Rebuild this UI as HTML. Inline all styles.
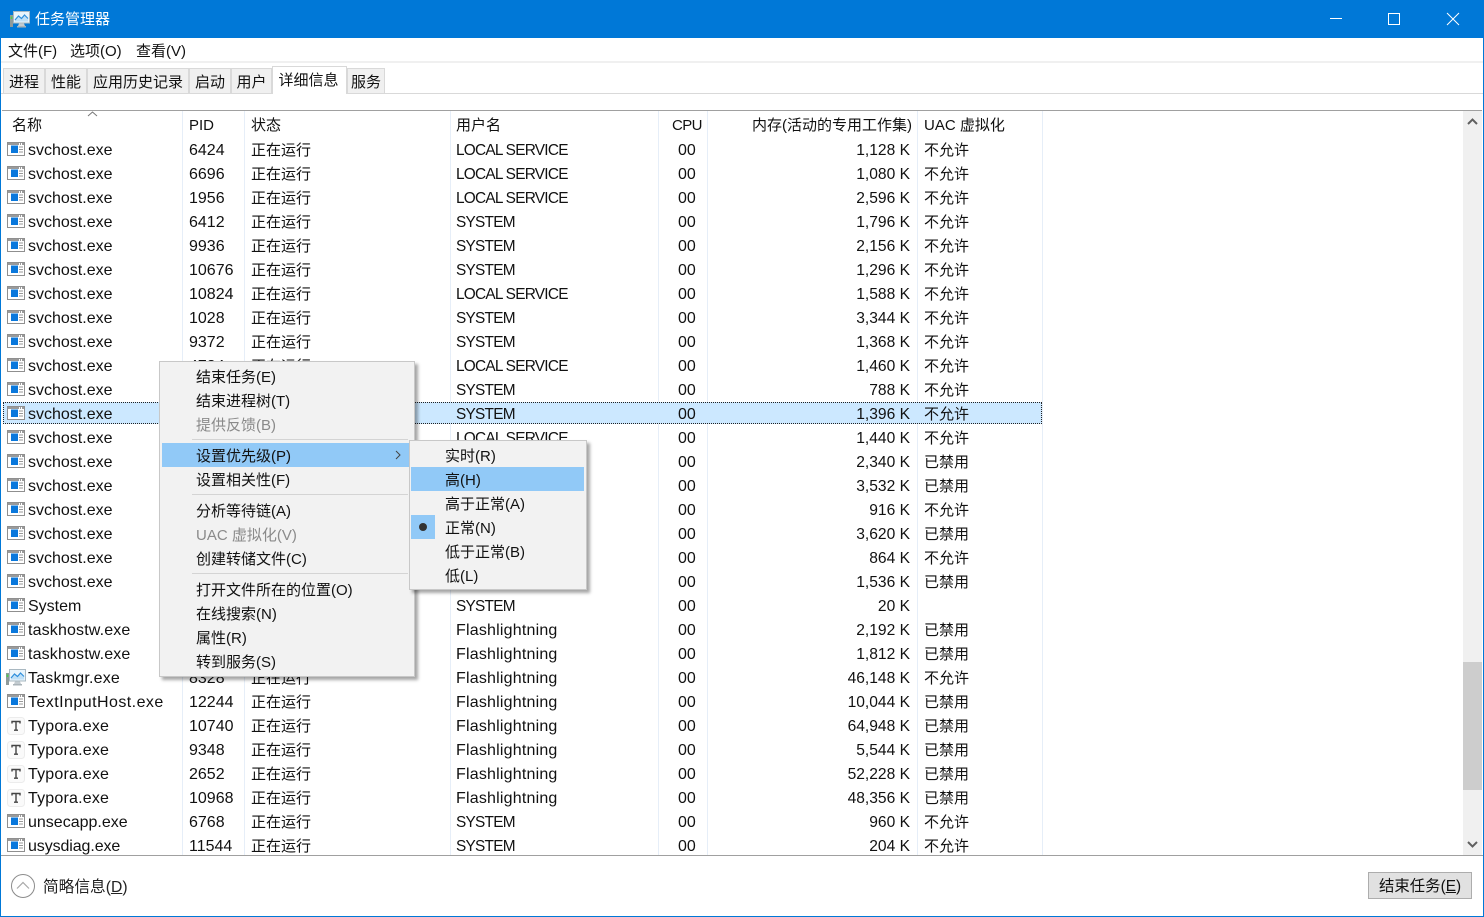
<!DOCTYPE html>
<html lang="zh"><head><meta charset="utf-8"><title>任务管理器</title>
<style>
html,body{margin:0;padding:0;width:1484px;height:917px;overflow:hidden;background:#fff}
body{position:relative;font:15px/24px "Liberation Sans","Noto Sans CJK SC",sans-serif;color:#111}
.a{position:absolute}
.t{position:absolute;white-space:nowrap;line-height:24px}
#tb{left:0;top:0;width:1484px;height:38px;background:#0078d7}
.tab{position:absolute;top:68px;height:25px;background:#f0f0f0;border:1px solid #d9d9d9;border-bottom:0;box-sizing:border-box;text-align:center;line-height:28px;white-space:nowrap}
table{position:absolute;left:0;top:138px;border-collapse:collapse;table-layout:fixed;width:1042px}
td{padding:0;height:24px;line-height:23px;white-space:nowrap;overflow:hidden;font-size:16px;position:relative}
td:nth-child(1){width:182px;padding-left:28px;box-sizing:border-box}
td:nth-child(2){width:62px;padding-left:7px;box-sizing:border-box}
td:nth-child(3){width:206px;padding-left:7px;box-sizing:border-box;font-size:15px}
td:nth-child(4){width:208px;padding-left:6px;box-sizing:border-box;font-size:15.4px;letter-spacing:-.75px}
td:nth-child(4).f{font-size:16px;letter-spacing:.2px}
td:nth-child(5){width:49px;padding-left:20px;box-sizing:border-box}
td:nth-child(6){width:210px;padding-right:7px;box-sizing:border-box;text-align:right;font-size:15.6px}
td:nth-child(7){width:125px;padding-left:7px;box-sizing:border-box;font-size:15px}
td svg{position:absolute;left:7px;top:4px}
.vl{position:absolute;width:1px;background:#e6eef8;top:111px;height:744px}
.h{position:absolute;top:114px;white-space:nowrap;line-height:24px}
#menu{left:159px;top:361px;width:256px;height:316px;background:#f2f2f2;border:1px solid #c8c8c8;box-sizing:border-box;box-shadow:3px 3px 3px rgba(0,0,0,.35)}
#sub{left:409px;top:440px;width:178px;height:150px;background:#f2f2f2;border:1px solid #c8c8c8;box-sizing:border-box;box-shadow:3px 3px 3px rgba(0,0,0,.35)}
.g{color:#8a8a8a}
u{text-decoration:underline}
.ty{top:3px}
.m .t{margin-top:2px}
</style></head><body>
<svg width="0" height="0" style="position:absolute"><defs>
<symbol id="w" viewBox="0 0 18 15"><rect x=".5" y=".5" width="17" height="13" fill="#fff" stroke="#8f8f8f"/><rect x="1" y="1" width="16" height="2" fill="#9a9a9a"/><rect x="12" y="1" width="1" height="2" fill="#fff"/><rect x="14" y="1" width="1" height="2" fill="#fff"/><rect x="4" y="3.500" width="7" height="7.500" fill="#0a78dc"/><path d="M12 5h4M12 7.500h4M12 10h4" stroke="#9a9a9a" stroke-width="1"/></symbol>
<symbol id="ty" viewBox="0 0 18 18"><rect x=".5" y=".5" width="17" height="17" rx="3" fill="#fafafa" stroke="#ececec"/><path d="M5 6.500V4.500h8v2M9 4.500V13M7 13.200h4" fill="none" stroke="#444" stroke-width="1.400"/></symbol>
<symbol id="tm" viewBox="0 0 20 17"><rect x="0" y="4" width="3" height="12" fill="#8f9a9a"/><rect x=".7" y="5.500" width="1.600" height="2.500" fill="#49d14b"/><rect x="3.500" y=".5" width="16" height="11.500" fill="#e8f4fc" stroke="#a9b8c1"/><path d="M5 9.500l3.500-4 3 2.500 3-3.500 3.500 3.500v2.500H5z" fill="#bfe0f7"/><path d="M5 9l3.500-4 3 2.500 3-3.500 3.500 3.500" fill="none" stroke="#2f8fdc" stroke-width="1.200"/><path d="M9 12.500h5l1 2.500H8z" fill="#c3cbd0"/><rect x="7" y="15" width="9" height="1.500" fill="#aab3b8"/></symbol>
</defs></svg>

<div id="tb" class="a"></div>
<svg class="a" style="left:10px;top:11px" width="20" height="17"><use href="#tm"/></svg>
<div class="t" style="left:35px;top:8px;color:#fff">任务管理器</div>
<svg class="a" style="left:1330px;top:0" width="140" height="38" fill="none" stroke="#fff" stroke-width="1"><path d="M0 18.500h12M58.500 13.500h11v11h-11zM117 13l12 12M129 13l-12 12"/></svg>
<div class="a" style="left:0;top:38px;width:1px;height:879px;background:#0078d7"></div>
<div class="a" style="left:1483px;top:38px;width:1px;height:879px;background:#0078d7"></div>
<div class="a" style="left:0;top:916px;width:1484px;height:1px;background:#0078d7"></div>

<div class="t" style="left:8px;top:40px">文件(F)</div>
<div class="t" style="left:70px;top:40px">选项(O)</div>
<div class="t" style="left:136px;top:40px">查看(V)</div>
<div class="a" style="left:1px;top:61px;width:1482px;height:2px;background:#f0f0f0"></div>

<div class="a" style="left:1px;top:93px;width:1482px;height:1px;background:#d9d9d9"></div>
<div class="tab" style="left:3px;width:42px">进程</div>
<div class="tab" style="left:45px;width:42px">性能</div>
<div class="tab" style="left:87px;width:102px">应用历史记录</div>
<div class="tab" style="left:189px;width:42px">启动</div>
<div class="tab" style="left:231px;width:41px">用户</div>
<div class="tab" style="left:272px;top:66px;width:75px;height:28px;background:#fff;line-height:27px;padding-right:2px">详细信息</div>
<div class="tab" style="left:347px;width:38px">服务</div>

<div class="a" style="left:2px;top:110px;width:1480px;height:1px;background:#a0a0a0"></div>

<div class="vl" style="left:182px"></div><div class="vl" style="left:244px"></div><div class="vl" style="left:450px"></div><div class="vl" style="left:658px"></div><div class="vl" style="left:707px"></div><div class="vl" style="left:917px"></div><div class="vl" style="left:1042px"></div>

<div class="a" style="left:3px;top:402px;width:1039px;height:22px;background:#cce8ff;border:1px dotted #222;box-sizing:border-box"></div>

<div class="h" style="left:12px">名称</div>
<svg class="a" style="left:87px;top:111px" width="11" height="6" fill="none" stroke="#777"><path d="M1 5l4.500-4 4.500 4"/></svg>
<div class="h" style="left:189px">PID</div>
<div class="h" style="left:251px">状态</div>
<div class="h" style="left:456px">用户名</div>
<div class="h" style="left:672px;letter-spacing:-.6px">CPU</div>
<div class="h" style="right:572px">内存(活动的专用工作集)</div>
<div class="h" style="left:924px">UAC 虚拟化</div>

<table><tbody>
<tr><td><svg width="18" height="15"><use href="#w"/></svg>svchost.exe</td><td>6424</td><td>正在运行</td><td>LOCAL SERVICE</td><td>00</td><td>1,128 K</td><td>不允许</td></tr>
<tr><td><svg width="18" height="15"><use href="#w"/></svg>svchost.exe</td><td>6696</td><td>正在运行</td><td>LOCAL SERVICE</td><td>00</td><td>1,080 K</td><td>不允许</td></tr>
<tr><td><svg width="18" height="15"><use href="#w"/></svg>svchost.exe</td><td>1956</td><td>正在运行</td><td>LOCAL SERVICE</td><td>00</td><td>2,596 K</td><td>不允许</td></tr>
<tr><td><svg width="18" height="15"><use href="#w"/></svg>svchost.exe</td><td>6412</td><td>正在运行</td><td>SYSTEM</td><td>00</td><td>1,796 K</td><td>不允许</td></tr>
<tr><td><svg width="18" height="15"><use href="#w"/></svg>svchost.exe</td><td>9936</td><td>正在运行</td><td>SYSTEM</td><td>00</td><td>2,156 K</td><td>不允许</td></tr>
<tr><td><svg width="18" height="15"><use href="#w"/></svg>svchost.exe</td><td>10676</td><td>正在运行</td><td>SYSTEM</td><td>00</td><td>1,296 K</td><td>不允许</td></tr>
<tr><td><svg width="18" height="15"><use href="#w"/></svg>svchost.exe</td><td>10824</td><td>正在运行</td><td>LOCAL SERVICE</td><td>00</td><td>1,588 K</td><td>不允许</td></tr>
<tr><td><svg width="18" height="15"><use href="#w"/></svg>svchost.exe</td><td>1028</td><td>正在运行</td><td>SYSTEM</td><td>00</td><td>3,344 K</td><td>不允许</td></tr>
<tr><td><svg width="18" height="15"><use href="#w"/></svg>svchost.exe</td><td>9372</td><td>正在运行</td><td>SYSTEM</td><td>00</td><td>1,368 K</td><td>不允许</td></tr>
<tr><td><svg width="18" height="15"><use href="#w"/></svg>svchost.exe</td><td>4784</td><td>正在运行</td><td>LOCAL SERVICE</td><td>00</td><td>1,460 K</td><td>不允许</td></tr>
<tr><td><svg width="18" height="15"><use href="#w"/></svg>svchost.exe</td><td></td><td></td><td>SYSTEM</td><td>00</td><td>788 K</td><td>不允许</td></tr>
<tr><td><svg width="18" height="15"><use href="#w"/></svg>svchost.exe</td><td></td><td></td><td>SYSTEM</td><td>00</td><td>1,396 K</td><td>不允许</td></tr>
<tr><td><svg width="18" height="15"><use href="#w"/></svg>svchost.exe</td><td></td><td></td><td>LOCAL SERVICE</td><td>00</td><td>1,440 K</td><td>不允许</td></tr>
<tr><td><svg width="18" height="15"><use href="#w"/></svg>svchost.exe</td><td></td><td></td><td></td><td>00</td><td>2,340 K</td><td>已禁用</td></tr>
<tr><td><svg width="18" height="15"><use href="#w"/></svg>svchost.exe</td><td></td><td></td><td></td><td>00</td><td>3,532 K</td><td>已禁用</td></tr>
<tr><td><svg width="18" height="15"><use href="#w"/></svg>svchost.exe</td><td></td><td></td><td></td><td>00</td><td>916 K</td><td>不允许</td></tr>
<tr><td><svg width="18" height="15"><use href="#w"/></svg>svchost.exe</td><td></td><td></td><td></td><td>00</td><td>3,620 K</td><td>已禁用</td></tr>
<tr><td><svg width="18" height="15"><use href="#w"/></svg>svchost.exe</td><td></td><td></td><td></td><td>00</td><td>864 K</td><td>不允许</td></tr>
<tr><td><svg width="18" height="15"><use href="#w"/></svg>svchost.exe</td><td></td><td></td><td></td><td>00</td><td>1,536 K</td><td>已禁用</td></tr>
<tr><td><svg width="18" height="15"><use href="#w"/></svg>System</td><td></td><td></td><td>SYSTEM</td><td>00</td><td>20 K</td><td></td></tr>
<tr><td style="letter-spacing:.15px"><svg width="18" height="15"><use href="#w"/></svg>taskhostw.exe</td><td></td><td></td><td class="f">Flashlightning</td><td>00</td><td>2,192 K</td><td>已禁用</td></tr>
<tr><td style="letter-spacing:.15px"><svg width="18" height="15"><use href="#w"/></svg>taskhostw.exe</td><td></td><td></td><td class="f">Flashlightning</td><td>00</td><td>1,812 K</td><td>已禁用</td></tr>
<tr><td style="letter-spacing:.2px"><svg width="20" height="17" style="left:6px;top:3px"><use href="#tm"/></svg>Taskmgr.exe</td><td>8328</td><td>正在运行</td><td class="f">Flashlightning</td><td>00</td><td>46,148 K</td><td>不允许</td></tr>
<tr><td style="letter-spacing:.45px"><svg width="18" height="15"><use href="#w"/></svg>TextInputHost.exe</td><td>12244</td><td>正在运行</td><td class="f">Flashlightning</td><td>00</td><td>10,044 K</td><td>已禁用</td></tr>
<tr><td style="letter-spacing:.2px"><svg class="ty" width="18" height="18"><use href="#ty"/></svg>Typora.exe</td><td>10740</td><td>正在运行</td><td class="f">Flashlightning</td><td>00</td><td>64,948 K</td><td>已禁用</td></tr>
<tr><td style="letter-spacing:.2px"><svg class="ty" width="18" height="18"><use href="#ty"/></svg>Typora.exe</td><td>9348</td><td>正在运行</td><td class="f">Flashlightning</td><td>00</td><td>5,544 K</td><td>已禁用</td></tr>
<tr><td style="letter-spacing:.2px"><svg class="ty" width="18" height="18"><use href="#ty"/></svg>Typora.exe</td><td>2652</td><td>正在运行</td><td class="f">Flashlightning</td><td>00</td><td>52,228 K</td><td>已禁用</td></tr>
<tr><td style="letter-spacing:.2px"><svg class="ty" width="18" height="18"><use href="#ty"/></svg>Typora.exe</td><td>10968</td><td>正在运行</td><td class="f">Flashlightning</td><td>00</td><td>48,356 K</td><td>已禁用</td></tr>
<tr><td><svg width="18" height="15"><use href="#w"/></svg>unsecapp.exe</td><td>6768</td><td>正在运行</td><td>SYSTEM</td><td>00</td><td>960 K</td><td>不允许</td></tr>
<tr><td style="letter-spacing:-.1px"><svg width="18" height="15"><use href="#w"/></svg>usysdiag.exe</td><td>11544</td><td>正在运行</td><td>SYSTEM</td><td>00</td><td>204 K</td><td>不允许</td></tr>
</tbody></table>

<div class="a" style="left:1463px;top:111px;width:19px;height:744px;background:#f0f0f0"></div>
<div class="a" style="left:1463px;top:662px;width:19px;height:128px;background:#cdcdcd"></div>
<svg class="a" style="left:1467px;top:117px" width="11" height="9" fill="none" stroke="#606060" stroke-width="2"><path d="M1 7l4.500-4.500L10 7"/></svg>
<svg class="a" style="left:1467px;top:840px" width="11" height="9" fill="none" stroke="#606060" stroke-width="2"><path d="M1 2l4.500 4.500L10 2"/></svg>

<div class="a" style="left:1px;top:855px;width:1482px;height:1px;background:#a0a0a0"></div>
<svg class="a" style="left:11px;top:874px" width="25" height="25" fill="none" stroke="#8c8c8c"><circle cx="12" cy="12" r="11.500"/><path d="M6 14.500l6-6 6 6" stroke="#a8a8a8" stroke-width="1.200"/></svg>
<div class="t" style="left:43px;top:876px;color:#222;font-size:15.7px">简略信息(<u>D</u>)</div>
<div class="a" style="left:1368px;top:872px;width:104px;height:27px;background:#e1e1e1;border:1px solid #adadad;box-sizing:border-box"></div>
<div class="t" style="left:1379px;top:875px;font-size:15.4px">结束任务(<u>E</u>)</div>

<div id="menu" class="a"></div>
<div class="m">
<div class="t" style="left:196px;top:364px">结束任务(E)</div>
<div class="t" style="left:196px;top:388px">结束进程树(T)</div>
<div class="t g" style="left:196px;top:412px">提供反馈(B)</div>
</div>
<div class="a" style="left:192px;top:439px;width:216px;height:1px;background:#d4d4d4"></div>
<div class="a" style="left:162px;top:443px;width:247px;height:24px;background:#91c9f7"></div>
<div class="m">
<div class="t" style="left:196px;top:443px">设置优先级(P)</div>
<div class="t" style="left:196px;top:467px">设置相关性(F)</div>
</div>
<svg class="a" style="left:395px;top:450px" width="7" height="10" fill="none" stroke="#444"><path d="M1 1l4 4-4 4"/></svg>
<div class="a" style="left:192px;top:494px;width:216px;height:1px;background:#d4d4d4"></div>
<div class="m">
<div class="t" style="left:196px;top:498px">分析等待链(A)</div>
<div class="t g" style="left:196px;top:522px">UAC 虚拟化(V)</div>
<div class="t" style="left:196px;top:546px">创建转储文件(C)</div>
</div>
<div class="a" style="left:192px;top:573px;width:216px;height:1px;background:#d4d4d4"></div>
<div class="m">
<div class="t" style="left:196px;top:577px">打开文件所在的位置(O)</div>
<div class="t" style="left:196px;top:601px">在线搜索(N)</div>
<div class="t" style="left:196px;top:625px">属性(R)</div>
<div class="t" style="left:196px;top:649px">转到服务(S)</div>
</div>

<div id="sub" class="a"></div>
<div class="a" style="left:411px;top:467px;width:173px;height:24px;background:#91c9f7"></div>
<div class="a" style="left:411px;top:515px;width:24px;height:24px;background:#91c9f7"></div>
<div class="a" style="left:419px;top:523px;width:8px;height:8px;border-radius:50%;background:#333"></div>
<div class="m">
<div class="t" style="left:445px;top:443px">实时(R)</div>
<div class="t" style="left:445px;top:467px">高(H)</div>
<div class="t" style="left:445px;top:491px">高于正常(A)</div>
<div class="t" style="left:445px;top:515px">正常(N)</div>
<div class="t" style="left:445px;top:539px">低于正常(B)</div>
<div class="t" style="left:445px;top:563px">低(L)</div>
</div>
</body></html>
